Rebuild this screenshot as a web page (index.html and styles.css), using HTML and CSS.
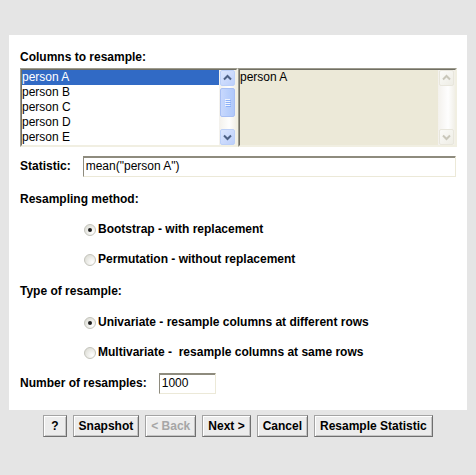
FILE: index.html
```html
<!DOCTYPE html>
<html>
<head>
<meta charset="utf-8">
<link rel="stylesheet" href="styles.css">
</head>
<body>
<div class="page">
  <div class="panel">
    <div class="row r-cols"><span class="lbl">Columns to resample:</span></div>
    <div class="lists">
      <div class="list list-left">
        <div class="list-inner">
          <div class="items">
            <div class="item sel">person A</div>
            <div class="item">person B</div>
            <div class="item">person C</div>
            <div class="item">person D</div>
            <div class="item">person E</div>
          </div>
          <div class="sb">
            <div class="sb-btn"><svg width="15" height="16" viewBox="0 0 15 16"><polyline points="4,9.5 7.5,6 11,9.5" fill="none" stroke="#4d6185" stroke-width="2"/></svg></div>
            <div class="sb-thumb"><svg width="15" height="29" viewBox="0 0 15 29"><g stroke="#eef3fe" stroke-width="1"><line x1="5" y1="11.5" x2="10" y2="11.5"/><line x1="5" y1="13.5" x2="10" y2="13.5"/><line x1="5" y1="15.5" x2="10" y2="15.5"/><line x1="5" y1="17.5" x2="10" y2="17.5"/></g><g stroke="#8cb0f8" stroke-width="1"><line x1="6" y1="12.5" x2="11" y2="12.5"/><line x1="6" y1="14.5" x2="11" y2="14.5"/><line x1="6" y1="16.5" x2="11" y2="16.5"/><line x1="6" y1="18.5" x2="11" y2="18.5"/></g></svg></div>
            <div class="sb-fill"></div>
            <div class="sb-btn"><svg width="15" height="16" viewBox="0 0 15 16"><polyline points="4,6.5 7.5,10 11,6.5" fill="none" stroke="#4d6185" stroke-width="2"/></svg></div>
          </div>
        </div>
      </div>
      <div class="list list-right">
        <div class="list-inner">
          <div class="items items-right">
            <div class="item">person A</div>
          </div>
          <div class="sb sb-dis">
            <div class="sb-btn"><svg width="15" height="16" viewBox="0 0 15 16"><polyline points="4,9.5 7.5,6 11,9.5" fill="none" stroke="#c9c7ba" stroke-width="2"/></svg></div>
            <div class="sb-fill"></div>
            <div class="sb-btn"><svg width="15" height="16" viewBox="0 0 15 16"><polyline points="4,6.5 7.5,10 11,6.5" fill="none" stroke="#c9c7ba" stroke-width="2"/></svg></div>
          </div>
        </div>
      </div>
    </div>
    <div class="row field-row r-stat">
      <span class="lbl">Statistic:</span>
      <div class="field field-stat">mean("person A")</div>
    </div>
    <div class="row r-sec"><span class="lbl">Resampling method:</span></div>
    <div class="row radio-row r-opt">
      <svg class="radio" width="12" height="12" viewBox="0 0 12 12"><defs><radialGradient id="g1" cx="0.7" cy="0.7" r="0.8"><stop offset="0" stop-color="#ffffff"/><stop offset="1" stop-color="#dcdcd4"/></radialGradient></defs><circle cx="6" cy="6" r="5.5" fill="url(#g1)" stroke="#c4c4bc"/><circle cx="6" cy="6" r="2" fill="#1e1e1e"/></svg>
      <span class="lbl">Bootstrap - with replacement</span>
    </div>
    <div class="row radio-row r-opt">
      <svg class="radio" width="12" height="12" viewBox="0 0 12 12"><defs><radialGradient id="g2" cx="0.7" cy="0.7" r="0.8"><stop offset="0" stop-color="#ffffff"/><stop offset="1" stop-color="#dcdcd4"/></radialGradient></defs><circle cx="6" cy="6" r="5.5" fill="url(#g2)" stroke="#c4c4bc"/></svg>
      <span class="lbl">Permutation - without replacement</span>
    </div>
    <div class="row r-sec2"><span class="lbl">Type of resample:</span></div>
    <div class="row radio-row r-opt1">
      <svg class="radio" width="12" height="12" viewBox="0 0 12 12"><defs><radialGradient id="g3" cx="0.7" cy="0.7" r="0.8"><stop offset="0" stop-color="#ffffff"/><stop offset="1" stop-color="#dcdcd4"/></radialGradient></defs><circle cx="6" cy="6" r="5.5" fill="url(#g3)" stroke="#c4c4bc"/><circle cx="6" cy="6" r="2" fill="#1e1e1e"/></svg>
      <span class="lbl">Univariate - resample columns at different rows</span>
    </div>
    <div class="row radio-row r-opt">
      <svg class="radio" width="12" height="12" viewBox="0 0 12 12"><defs><radialGradient id="g4" cx="0.7" cy="0.7" r="0.8"><stop offset="0" stop-color="#ffffff"/><stop offset="1" stop-color="#dcdcd4"/></radialGradient></defs><circle cx="6" cy="6" r="5.5" fill="url(#g4)" stroke="#c4c4bc"/></svg>
      <span class="lbl">Multivariate -&nbsp; resample columns at same rows</span>
    </div>
    <div class="row field-row r-num">
      <span class="lbl">Number of resamples:</span>
      <div class="field field-num">1000</div>
    </div>
  </div>
  <div class="buttons">
    <div class="btn btn-q">?</div>
    <div class="btn">Snapshot</div>
    <div class="btn btn-dis">&lt; Back</div>
    <div class="btn">Next &gt;</div>
    <div class="btn">Cancel</div>
    <div class="btn">Resample Statistic</div>
  </div>
</div>
</body>
</html>
```

FILE: styles.css
```css
html, body {
  margin: 0;
  padding: 0;
  background: #e5e5e5;
}
body {
  font-family: "Liberation Sans", Arial, sans-serif;
  font-size: 12px;
  color: #000;
}
.page {
  width: 476px;
  height: 475px;
  padding-top: 35px;
  box-sizing: border-box;
}
.panel {
  margin-left: 9px;
  width: 458px;
  height: 375px;
  box-sizing: border-box;
  background: #ffffff;
  padding: 15px 0 0 11px;
  display: flex;
  flex-direction: column;
}
.row {
  display: flex;
  align-items: center;
  height: 15px;
  line-height: 15px;
}
.lbl {
  font-weight: bold;
  white-space: pre;
}
.lists {
  display: flex;
  margin-top: 3px;
  height: 79px;
}
.list {
  border: 1px solid;
  border-color: #9d9b8e #f1efe2 #f1efe2 #9d9b8e;
}
.list-inner {
  display: flex;
  height: 75px;
  border: 1px solid;
  border-color: #716f64 #f1efe2 #f1efe2 #716f64;
}
.list-left { width: 218px; box-sizing: border-box; }
.list-right { width: 219px; box-sizing: border-box; }
.items {
  flex: 1;
  background: #ffffff;
  line-height: 15px;
}
.items-right {
  background: #ece9d8;
}
.item {
  height: 15px;
  white-space: nowrap;
}
.item.sel {
  background: #316ac5;
  color: #ffffff;
}
.sb {
  width: 17px;
  display: flex;
  flex-direction: column;
  align-items: center;
  background: linear-gradient(to right, #f3f1ec, #fefefe 60%, #f1efe7);
}
.sb-btn {
  width: 15px;
  height: 16px;
  box-sizing: border-box;
  border-radius: 2px;
  border: 1px solid #bcd0f8;
  background: linear-gradient(to bottom right, #dbe6fe, #bccffb);
  display: flex;
}
.sb-btn svg { margin: -1px; }
.sb-thumb {
  width: 15px;
  height: 29px;
  margin-top: 2px;
  box-sizing: border-box;
  border-radius: 2px;
  border: 1px solid #a8bff4;
  background: linear-gradient(to right, #c8d8fd, #bad0fc 50%, #b0c8fa);
  display: flex;
}
.sb-thumb svg { margin: -1px; }
.sb-fill { flex: 1; }
.sb-dis .sb-btn {
  border-color: #e8e6dc;
  background: linear-gradient(to bottom right, #fbfbf8, #eeede5);
}
.field-row {
  height: 21px;
  gap: 12px;
}
.r-stat { margin-top: 9px; }
.r-sec { margin-top: 15px; }
.r-opt { margin-top: 15px; }
.r-sec2 { margin-top: 17px; }
.r-opt1 { margin-top: 16px; }
.r-num { margin-top: 13px; }
.field {
  height: 21px;
  box-sizing: border-box;
  border: 1px solid;
  border-color: #8e8b7e #ece9d8 #ece9d8 #8e8b7e;
  box-shadow: inset 0 1px 0 #8e8b7e;
  padding: 2px 0 0 2px;
  line-height: 15px;
  white-space: nowrap;
  background: #ffffff;
}
.field-stat { width: 373px; }
.field-num { width: 57px; }
.radio-row {
  padding-left: 64px;
}
.radio {
  margin-right: 2px;
  flex: none;
}
.buttons {
  display: flex;
  justify-content: center;
  gap: 6px;
  margin-top: 5px;
}
.btn {
  height: 22px;
  box-sizing: border-box;
  padding: 0 5px;
  line-height: 20px;
  font-weight: bold;
  background: #ececec;
  border: 1px solid;
  border-color: #a3a3a3 #6f6f6f #6f6f6f #a3a3a3;
  box-shadow: inset 1px 1px 0 #ffffff, inset -1px -1px 0 #c4c4c4;
  white-space: nowrap;
}
.btn-q { padding: 0 7px; }
.btn-dis { color: #a6a6a6; }
```
